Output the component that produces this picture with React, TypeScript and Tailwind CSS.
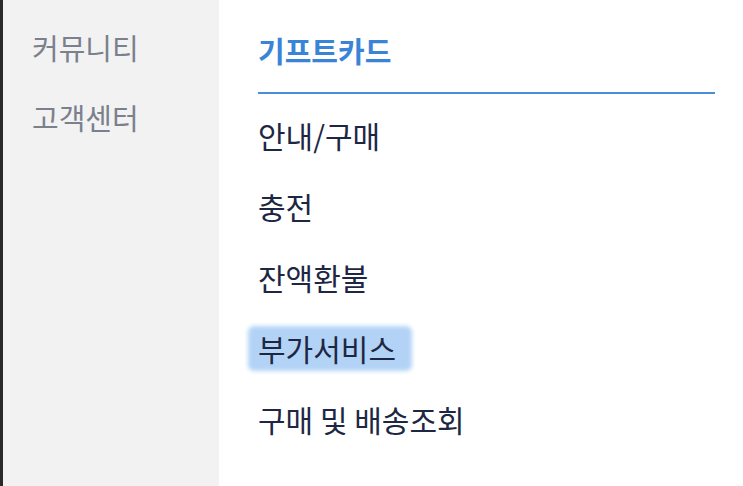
import React from 'react'

const items = ['안내/구매', '충전', '잔액환불', '부가서비스', '구매 및 배송조회']

export default function App() {
  return (
    <div className="flex h-[486px] w-[743px] overflow-hidden bg-white font-['Noto_Sans_CJK_KR','Noto_Sans',sans-serif]">
      {/* left category column */}
      <div className="flex w-[219px] shrink-0 flex-col gap-[40px] border-l-[3px] border-[#2a2a2a] bg-[#f2f2f3] pl-[29px] pt-[32px]">
        <span className="text-[29px] leading-[30px] text-[#7b808d]">커뮤니티</span>
        <span className="text-[29px] leading-[30px] text-[#7b808d]">고객센터</span>
      </div>

      {/* right submenu */}
      <div className="flex flex-1 flex-col pl-[39px] pr-[28px] pt-[34px]">
        <div className="border-b-2 border-[#4a8ddb] pb-[24px]">
          <span className="text-[29px] font-bold leading-[32px] text-[#3a84d8]">기프트카드</span>
        </div>
        <ul className="flex flex-col gap-[41px] pt-[26px]">
          {items.map(item => (
            <li key={item} className="relative text-[30px] leading-[30px] text-[#1d2744]">
              {item === '부가서비스' && (
                <span className="absolute -left-[10px] -top-[7px] h-[45px] w-[164px] rounded-[6px] bg-[#b3d3f6] blur-[2px]" />
              )}
              <span className="relative">{item}</span>
            </li>
          ))}
        </ul>
      </div>
    </div>
  )
}
